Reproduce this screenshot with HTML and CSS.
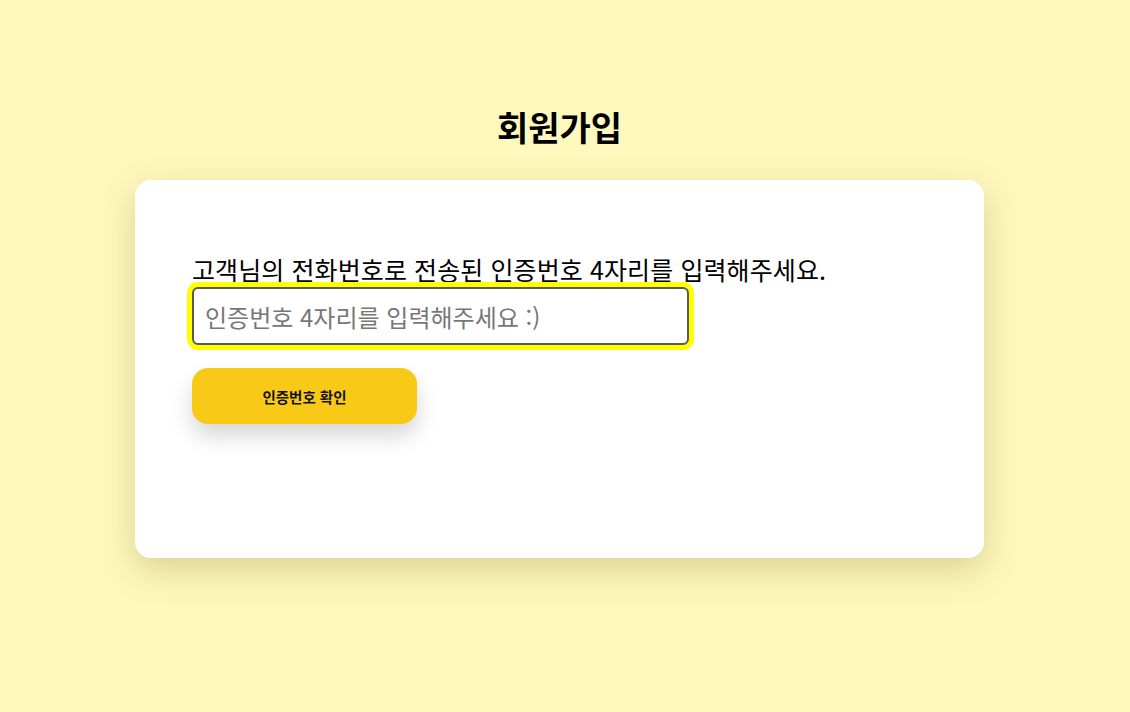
FILE: index.html
```html
<!DOCTYPE html>
<html lang="ko">
<head>
<meta charset="utf-8">
<title>회원가입</title>
<link rel="stylesheet" href="styles.css">
</head>
<body>
<main class="page">
  <h1 class="title">회원가입</h1>
  <section class="card">
    <p class="label">고객님의 전화번호로 전송된 인증번호 4자리를 입력해주세요.</p>
    <input class="code-input" type="text" placeholder="인증번호 4자리를 입력해주세요 :)" autofocus>
    <button class="confirm-btn" type="button">인증번호 확인</button>
  </section>
</main>
</body>
</html>
```
FILE: styles.css
```css
html, body {
  margin: 0;
  padding: 0;
}
body {
  background: #fff8bd;
  font-family: "Noto Sans CJK KR", "Noto Sans", sans-serif;
  color: #000;
  height: 712px;
  overflow: hidden;
}
.page {
  width: 849px;
  margin-left: 135px;
  padding-top: 104px;
  display: flex;
  flex-direction: column;
}
.title {
  margin: 0;
  text-align: center;
  font-size: 34px;
  font-weight: 700;
  line-height: 46px;
}
.card {
  margin-top: 30px;
  height: 378px;
  box-sizing: border-box;
  background: #fff;
  border-radius: 16px;
  box-shadow: 0 12px 34px rgba(120, 110, 40, 0.28);
  padding: 71px 57px 0;
  display: flex;
  flex-direction: column;
  align-items: flex-start;
}
.label {
  margin: 0;
  font-size: 25px;
  line-height: 36px;
  letter-spacing: 0.1px;
}
.code-input {
  margin-top: 0;
  width: 497px;
  height: 58px;
  box-sizing: border-box;
  border: 2px solid #5a5a5a;
  border-radius: 6px;
  padding: 0 11px;
  font-family: "Noto Sans CJK KR", "Noto Sans", sans-serif;
  font-size: 24px;
  color: #000;
  outline: none;
  box-shadow: 0 0 0 5px #ffff00;
}
.code-input::placeholder {
  color: #777;
}
.confirm-btn {
  margin-top: 23px;
  width: 225px;
  height: 56px;
  border: none;
  border-radius: 16px;
  background: #f8c916;
  box-shadow: 0 12px 22px rgba(0, 0, 0, 0.16);
  font-family: "Noto Sans CJK KR", sans-serif;
  font-size: 14.5px;
  font-weight: 700;
  color: #111;
  cursor: pointer;
}
```
